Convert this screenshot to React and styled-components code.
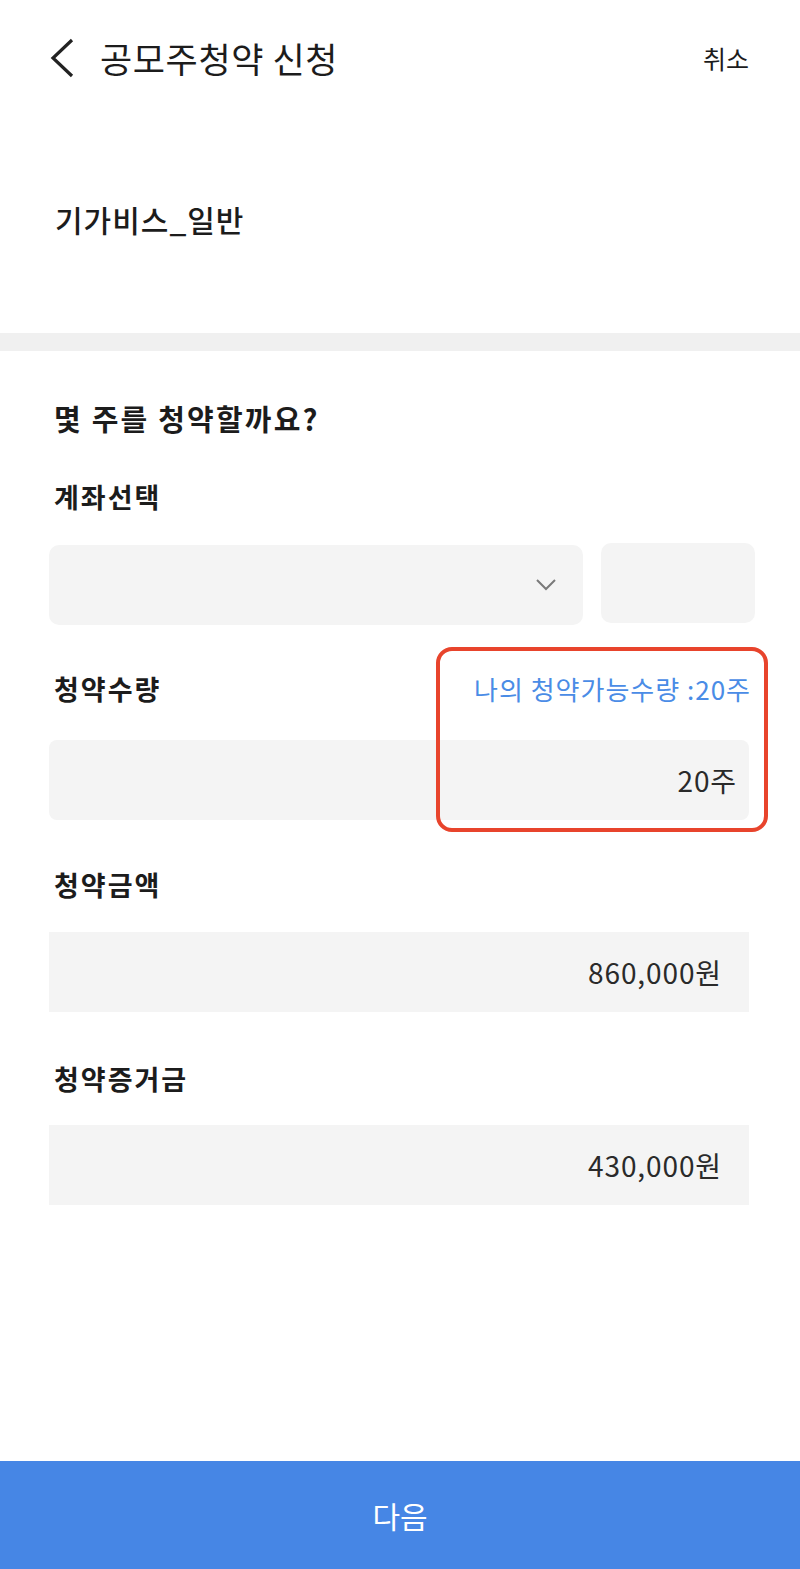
import React from "react";
import styled, { createGlobalStyle } from "styled-components";

const GlobalStyle = createGlobalStyle`
  body {
    margin: 0;
    background: #ffffff;
    font-family: "Noto Sans CJK KR", "Noto Sans", sans-serif;
    color: #1c1c1c;
  }
`;

const Page = styled.div`
  width: 800px;
  min-height: 1569px;
  display: flex;
  flex-direction: column;
  background: #ffffff;
`;

const Header = styled.header`
  height: 115px;
  display: flex;
  align-items: center;
  padding: 0 51px 0 50px;
  box-sizing: border-box;
`;

const BackButton = styled.button`
  border: none;
  background: none;
  padding: 0;
  width: 28px;
  height: 42px;
  display: flex;
  align-items: center;
  margin-right: 22px;
`;

const Title = styled.h1`
  margin: 0;
  font-size: 35px;
  font-weight: 400;
  letter-spacing: 0.6px;
  color: #1c1c1c;
  flex: 1;
`;

const Cancel = styled.span`
  font-size: 25px;
  color: #1c1c1c;
`;

const Product = styled.section`
  height: 218px;
  box-sizing: border-box;
  padding: 84px 55px 0;
  font-size: 30px;
  font-weight: 500;
  letter-spacing: 1px;
  line-height: 40px;
  color: #1c1c1c;
`;

const Divider = styled.div`
  height: 18px;
  background: #f0f0f0;
`;

const Content = styled.main`
  padding: 47px 0 0 49px;
  width: 706px;
`;

const Question = styled.h2`
  margin: 0 0 0 5px;
  font-size: 29px;
  font-weight: 600;
  letter-spacing: 2.2px;
  line-height: 40px;
  color: #1c1c1c;
`;

const Field = styled.div`
  position: relative;
  margin-top: ${(p) => p.$top || 45}px;
`;

const LabelRow = styled.div`
  display: flex;
  align-items: center;
  justify-content: space-between;
  height: 36px;
  padding-left: 5px;
`;

const Label = styled.span`
  font-size: 27px;
  font-weight: 600;
  letter-spacing: 2px;
  color: #1c1c1c;
`;

const Hint = styled.span`
  font-size: 26px;
  color: #4a8ce6;
  letter-spacing: 1px;
  margin-right: 4px;
`;

const SelectRow = styled.div`
  display: grid;
  grid-template-columns: 534px 154px;
  gap: 18px;
  margin-top: 31px;
  align-items: start;
`;

const SelectBox = styled.div`
  height: 80px;
  border-radius: 10px;
  background: #f4f4f4;
  display: flex;
  align-items: center;
  justify-content: flex-end;
  padding-right: 26px;
`;

const SideBox = styled.div`
  height: 80px;
  border-radius: 10px;
  background: #f4f4f4;
  margin-top: -2px;
`;

const ValueBox = styled.div`
  margin-top: ${(p) => p.$top || 30}px;
  width: 700px;
  height: 80px;
  box-sizing: border-box;
  background: #f4f4f4;
  border-radius: ${(p) => (p.$round ? "8px" : "0")};
  display: flex;
  align-items: center;
  justify-content: flex-end;
  padding-right: ${(p) => p.$pad || 27}px;
  font-size: 28px;
  letter-spacing: 0.9px;
  color: #2a2a2a;
`;

const Highlight = styled.div`
  position: absolute;
  top: -23px;
  bottom: -12px;
  left: 387px;
  right: -13px;
  border: 4px solid #e8442c;
  border-radius: 16px;
  pointer-events: none;
`;

const NextButton = styled.button`
  margin-top: auto;
  height: 108px;
  border: none;
  background: #4686e5;
  color: #ffffff;
  font-family: inherit;
  font-size: 30px;
  font-weight: 400;
  width: 100%;
`;

function Chevron({ dir = "left" }) {
  if (dir === "down") {
    return (
      <svg width="22" height="14" viewBox="0 0 22 14">
        <polyline points="2,2 11,11 20,2" fill="none" stroke="#7a7a7a" strokeWidth="2" />
      </svg>
    );
  }
  return (
    <svg width="26" height="42" viewBox="0 0 26 42">
      <polyline points="22,3 3,21 22,39" fill="none" stroke="#222" strokeWidth="3.2" />
    </svg>
  );
}

export default function App() {
  return (
    <Page>
      <GlobalStyle />
      <Header>
        <BackButton aria-label="뒤로">
          <Chevron />
        </BackButton>
        <Title>공모주청약 신청</Title>
        <Cancel>취소</Cancel>
      </Header>
      <Product>기가비스_일반</Product>
      <Divider />
      <Content>
        <Question>몇 주를 청약할까요?</Question>
        <Field $top={40}>
          <LabelRow>
            <Label>계좌선택</Label>
          </LabelRow>
          <SelectRow>
            <SelectBox>
              <Chevron dir="down" />
            </SelectBox>
            <SideBox />
          </SelectRow>
        </Field>
        <Field>
          <LabelRow>
            <Label>청약수량</Label>
            <Hint>나의 청약가능수량 :20주</Hint>
          </LabelRow>
          <ValueBox $top={34} $round $pad={12}>20주</ValueBox>
          <Highlight />
        </Field>
        <Field $top={46}>
          <LabelRow>
            <Label>청약금액</Label>
          </LabelRow>
          <ValueBox>860,000원</ValueBox>
        </Field>
        <Field $top={48}>
          <LabelRow>
            <Label>청약증거금</Label>
          </LabelRow>
          <ValueBox $top={29}>430,000원</ValueBox>
        </Field>
      </Content>
      <NextButton>다음</NextButton>
    </Page>
  );
}
